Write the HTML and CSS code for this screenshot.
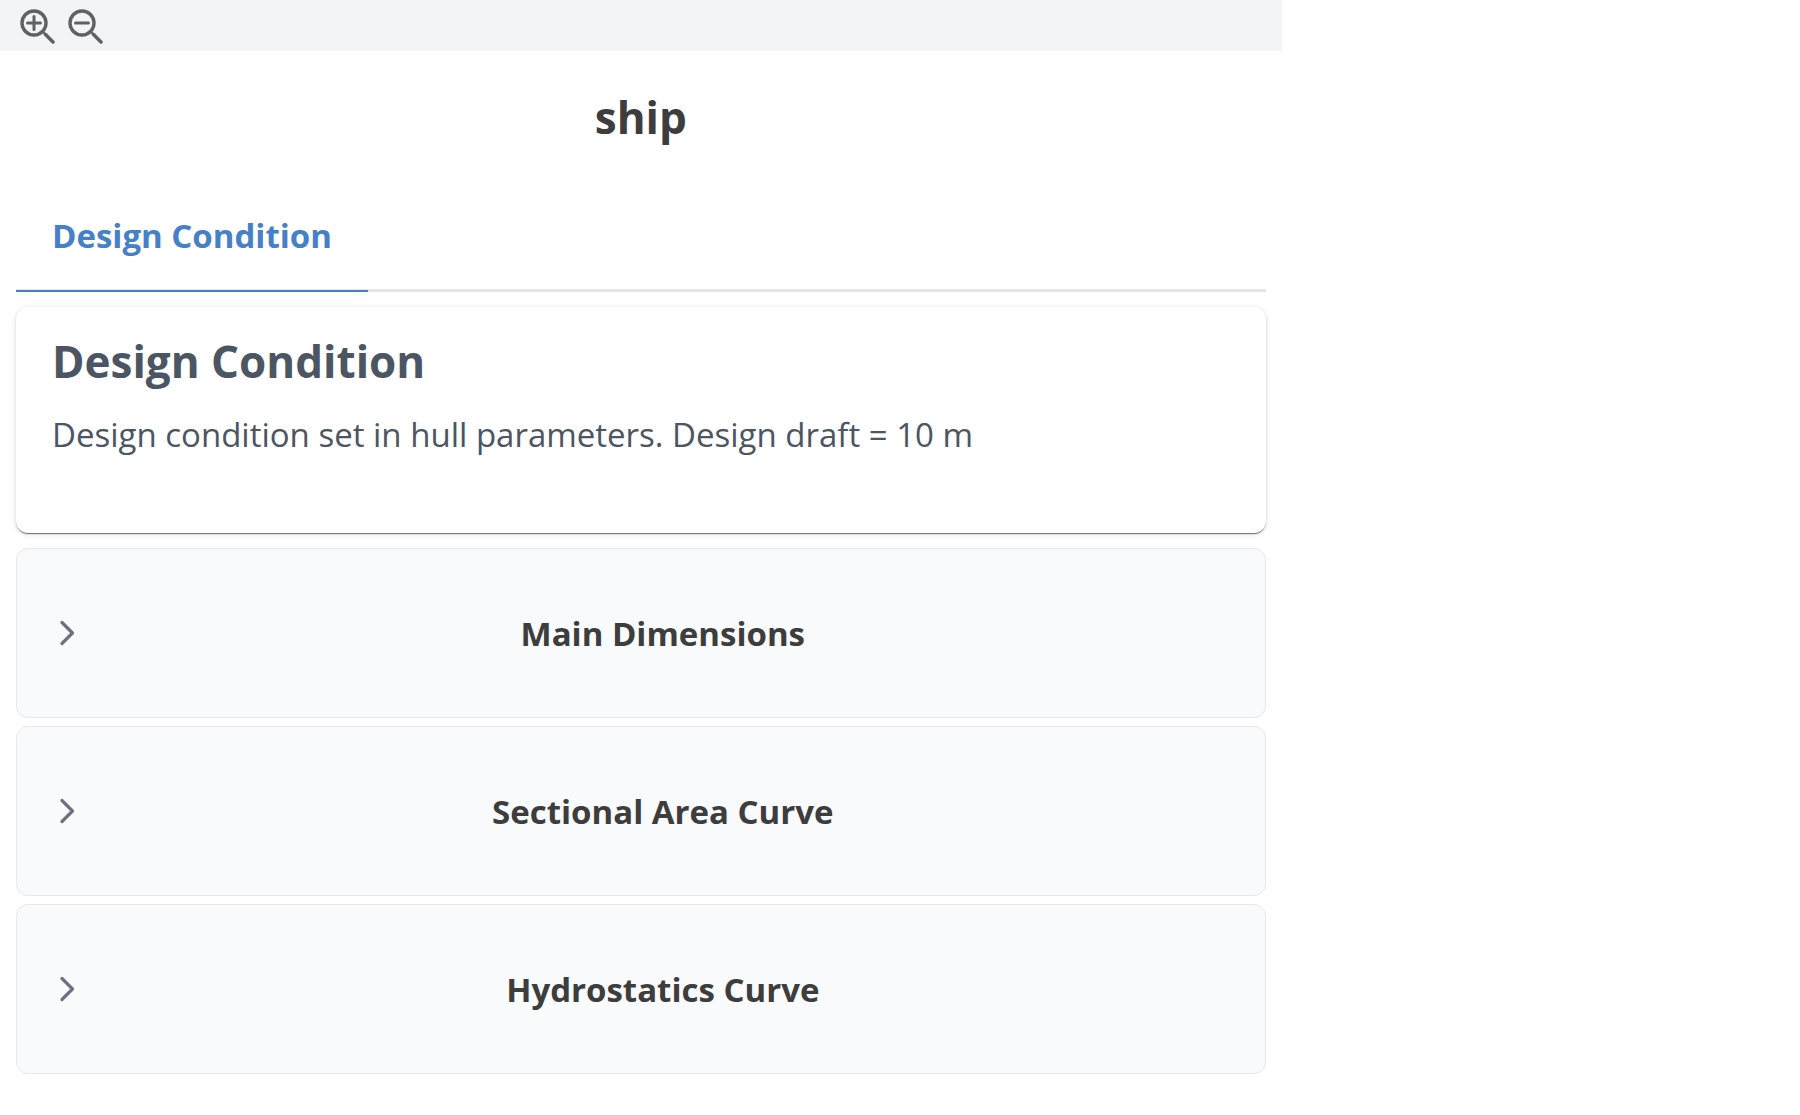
FILE: index.html
```html
<!DOCTYPE html>
<html lang="en">
<head>
    <meta charset="UTF-8">
    <meta name="viewport" content="width=device-width, initial-scale=1.0">
    <title>ship</title>
    <link rel="stylesheet" href="styles.css">
</head>
<body>
    <div class="report">
        <div class="toolbar">
            <button type="button" aria-label="Zoom in">
                <svg viewBox="0 0 36 36" fill="none" stroke="#616161">
                    <circle cx="14" cy="14" r="12" stroke-width="3.4"/>
                    <path d="M7.5 14h13M14 7.5v13" stroke-width="3" stroke-linecap="round"/>
                    <path d="M22.5 22.5l3 3" stroke-width="2"/>
                    <path d="M25.5 25.5l7.5 7.5" stroke-width="3.6" stroke-linecap="round"/>
                </svg>
            </button>
            <button type="button" aria-label="Zoom out">
                <svg viewBox="0 0 36 36" fill="none" stroke="#616161">
                    <circle cx="14" cy="14" r="12" stroke-width="3.4"/>
                    <path d="M7.5 14h13" stroke-width="3" stroke-linecap="round"/>
                    <path d="M22.5 22.5l3 3" stroke-width="2"/>
                    <path d="M25.5 25.5l7.5 7.5" stroke-width="3.6" stroke-linecap="round"/>
                </svg>
            </button>
        </div>

        <div class="content">
            <h1>ship</h1>

            <div class="tabs" role="tablist">
                <button type="button" class="tab" role="tab" aria-selected="true">Design Condition</button>
            </div>

            <div class="card">
                <h2>Design Condition</h2>
                <p>Design condition set in hull parameters. Design draft = 10 m</p>
            </div>

            <div class="panels">
                <button type="button" class="panel" aria-expanded="false">
                    <svg viewBox="0 0 28 28"><path d="M9 3.5l10.5 10.5-10.5 10.5"/></svg>
                    <span>Main Dimensions</span>
                </button>
                <button type="button" class="panel" aria-expanded="false">
                    <svg viewBox="0 0 28 28"><path d="M9 3.5l10.5 10.5-10.5 10.5"/></svg>
                    <span>Sectional Area Curve</span>
                </button>
                <button type="button" class="panel" aria-expanded="false">
                    <svg viewBox="0 0 28 28"><path d="M9 3.5l10.5 10.5-10.5 10.5"/></svg>
                    <span>Hydrostatics Curve</span>
                </button>
            </div>
        </div>
    </div>
</body>
</html>
```
FILE: styles.css
```css
body {
    margin: 0;
    font-family: "Open Sans", sans-serif;
    font-size: 33px;
    color: #3d3d3d;
    background-color: #fff;
}

button {
    padding: 0;
    border: none;
    background: none;
    font: inherit;
    color: inherit;
    cursor: pointer;
}

.report {
    width: 71.2%;
}

.toolbar {
    display: flex;
    gap: 12px;
    padding: 9px 20px 6px;
    background-color: #f3f4f6;
}

.toolbar button,
.toolbar svg {
    display: block;
    width: 36px;
    height: 36px;
}

.content {
    padding: 0 16px 40px;
}

h1 {
    margin: 0;
    padding: 34px 0 37px;
    font-size: 44px;
    line-height: 64px;
    font-weight: 700;
    text-align: center;
}

.tabs {
    display: flex;
    height: 103px;
    border-bottom: 3px solid #e5e5eb;
}

.tab {
    height: 106px;
    padding: 0 36px 4px;
    border-bottom: 2px solid #4680c8;
    line-height: 48px;
    font-weight: 700;
    color: #4680c8;
}

.card {
    margin-top: 15px;
    padding: 22px 36px 73px;
    border-radius: 12px;
    background-color: #fff;
    color: #4b5563;
    box-shadow: 0 2px 1px -1px rgba(0, 0, 0, 0.4), 0 1px 1px rgba(0, 0, 0, 0.2), 0 1px 5px rgba(0, 0, 0, 0.15);
}

.card h2 {
    margin: 0 0 17px;
    font-size: 44px;
    line-height: 64px;
    font-weight: 700;
}

.card p {
    margin: 0;
    line-height: 50px;
}

.panels {
    display: flex;
    flex-direction: column;
    gap: 8px;
    margin-top: 15px;
}

.panel {
    display: flex;
    align-items: center;
    gap: 16px;
    height: 170px;
    padding: 0 36px;
    border: 1px solid #e5e7eb;
    border-radius: 12px;
    background-color: #f9fafc;
    font-weight: 700;
}

.panel svg {
    width: 28px;
    height: 28px;
    fill: none;
    stroke: #6b7280;
    stroke-width: 3.2;
    stroke-linecap: round;
    stroke-linejoin: round;
}

.panel span {
    flex: 1;
}
```
